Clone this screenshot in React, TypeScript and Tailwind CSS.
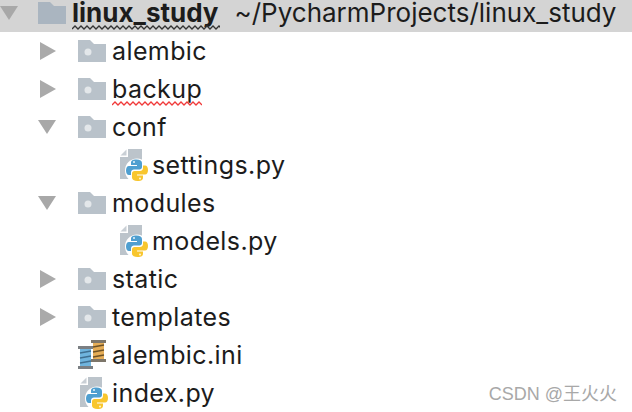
const font = "font-['Inter','Liberation_Sans',sans-serif]";

const Arrow = ({ open }: { open?: boolean }) => (
	<div className="w-[18px] h-[18px] shrink-0">
		<svg width="18" height="18" viewBox="0 0 18 18">
			{open ? (
				<polygon points="0,2 18,2 9,16" fill="#a8a8a8" />
			) : (
				<polygon points="1,0 17,9 1,18" fill="#aaaaaa" />
			)}
		</svg>
	</div>
);

const Folder = ({ plain }: { plain?: boolean }) => (
	<svg width="28" height="22" viewBox="0 0 28 22" className="shrink-0">
		<path d="M0 0H12L16 4H28V22H0Z" fill={plain ? "#aab5c0" : "#b9c2ca"} />
		{!plain && <circle cx="10" cy="12" r="3.5" fill="#e3e7ea" />}
	</svg>
);

const PyFile = () => (
	<svg width="29" height="33" viewBox="0 0 29 33" className="shrink-0">
		<path d="M8 0H22V30H0V8H8Z" fill="#bcc4cb" />
		<path d="M6.5 0.5V6.5H0.5Z" fill="#c9cfd5" />
		<circle cx="17" cy="21.5" r="12" fill="#ffffff" />
		<path
			d="M16.5 10.500C12 10.500 11 12 11 14V16H17V17H9C7 17 6 19 6 21.500C6 24 7 26 9 26H11V23.500C11 21.500 12.500 20.500 14 20.500H19.500C21 20.500 22 19.500 22 18V14C22 12 20 10.500 16.500 10.500Z"
			fill="#4f9fd0"
		/>
		<path
			d="M17.500 32C22 32 23 30.500 23 28.500V26.500H17V25.500H25C27 25.500 28 23.500 28 21C28 18.500 27 16.500 25 16.500H23V19C23 21 21.500 22 20 22H14.500C13 22 12 23 12 24.500V28.500C12 30.500 14 32 17.500 32Z"
			fill="#f8c62e"
		/>
		<circle cx="14" cy="13" r="1" fill="#e8f3fa" />
		<circle cx="20" cy="29.500" r="1" fill="#fff6d8" />
	</svg>
);

// two thread spools standing upright, caps at top and bottom
const Spool = () => (
	<svg width="28" height="30" viewBox="0 0 28 30" className="shrink-0">
		<rect x="2" y="9" width="11" height="17" fill="#6fb4de" />
		<path d="M2 13L13 11M2 18L13 16M2 23L13 21" stroke="#3f6f91" strokeWidth="1.500" />
		<rect x="0" y="6" width="15" height="3" fill="#7b7f83" />
		<rect x="0" y="26" width="15" height="3" fill="#7b7f83" />
		<rect x="15" y="3" width="11" height="16" fill="#e5ad57" />
		<path d="M15 7L26 5M15 12L26 10M15 17L26 15" stroke="#6e5226" strokeWidth="1.500" />
		<rect x="13" y="0" width="15" height="3" fill="#7d766a" />
		<rect x="13" y="19" width="15" height="3" fill="#7d766a" />
	</svg>
);

const Squiggle = ({ color, width, className }: { color: string; width: number; className: string }) => {
	let d = "M0 4";
	for (let x = 0; x < width; x += 6) {
		d += ` L${x + 3} 1 L${x + 6} 4`;
	}
	return (
		<svg width={width} height="5" viewBox={`0 0 ${width} 5`} className={`absolute left-0 ${className}`}>
			<path d={d} fill="none" stroke={color} strokeWidth="1.300" />
		</svg>
	);
};

const Row = ({ children }: { children: React.ReactNode }) => (
	<div className="h-[38px] flex items-center text-[25px] leading-none tracking-[0.4px] text-[#1c1c1c]">{children}</div>
);

const DirRow = ({ name, open, squiggle }: { name: string; open?: boolean; squiggle?: boolean }) => (
	<Row>
		<div className={`flex items-center ${open ? "ml-[38px] mr-[22px]" : "ml-[39px] mr-[21px]"}`}>
			<Arrow open={open} />
		</div>
		<Folder />
		<span className="relative ml-[6px]">
			{name}
			{squiggle && <Squiggle color="#f03a3a" width={90} className="top-[24px]" />}
		</span>
	</Row>
);

const PyRow = ({ name, nested }: { name: string; nested?: boolean }) => (
	<Row>
		<div className={nested ? "ml-[120px]" : "ml-[80px]"}>
			<PyFile />
		</div>
		<span className="ml-[3px]">{name}</span>
	</Row>
);

export default function App() {
	return (
		<div className={`relative w-[632px] h-[412px] overflow-hidden bg-white ${font}`}>
			<div className="h-[32px] bg-[#d4d4d4] flex items-start text-[26px] leading-[26px] text-[#1c1c1c]">
				<div className="mt-[4px] mr-[20px]">
					<Arrow open />
				</div>
				<div className="mt-[2px]">
					<Folder plain />
				</div>
				<span className="relative ml-[6px] font-bold">
					linux_study
					<Squiggle color="#333333" width={148} className="top-[25px]" />
				</span>
				<span className="ml-[16px]">~/PycharmProjects/linux_study</span>
			</div>
			<DirRow name="alembic" />
			<DirRow name="backup" squiggle />
			<DirRow name="conf" open />
			<PyRow name="settings.py" nested />
			<DirRow name="modules" open />
			<PyRow name="models.py" nested />
			<DirRow name="static" />
			<DirRow name="templates" />
			<Row>
				<div className="ml-[78px] mr-[6px]">
					<Spool />
				</div>
				alembic.ini
			</Row>
			<PyRow name="index.py" />
			<div className="absolute right-[15px] top-[382px] text-[18px] leading-[24px] text-[#a8a8a8] font-['Liberation_Sans','Noto_Sans_CJK_SC',sans-serif]">
				CSDN @王火火
			</div>
		</div>
	);
}
